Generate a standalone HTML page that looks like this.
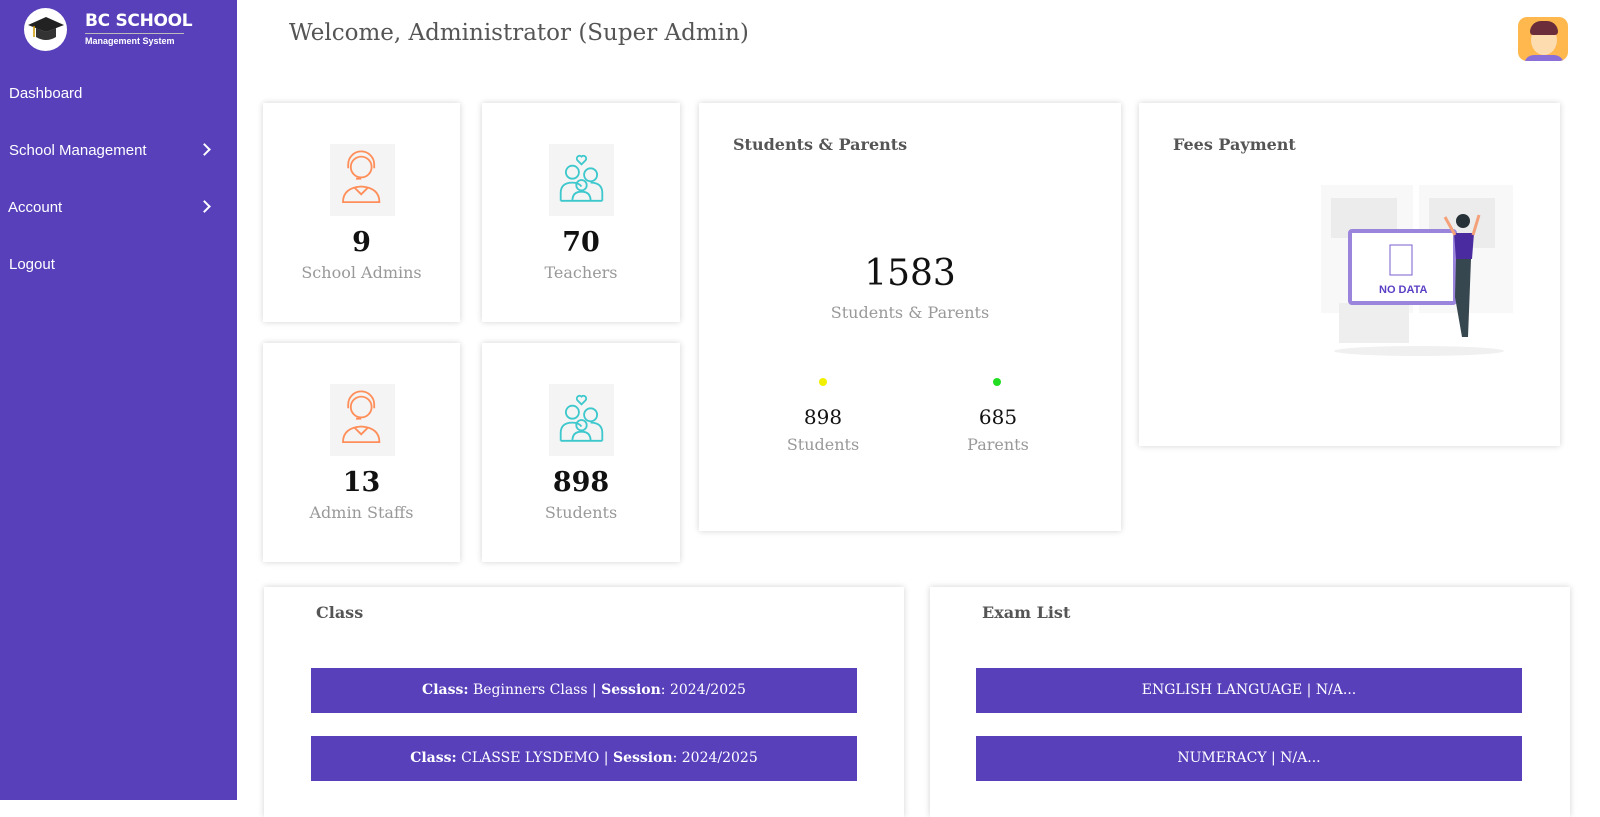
<!DOCTYPE html>
<html><head><meta charset="utf-8"><style>
*{margin:0;padding:0;box-sizing:border-box}
body{width:1600px;height:800px;overflow:hidden;background:#fff;font-family:"DejaVu Serif","Liberation Serif",serif;position:relative}
.side{position:absolute;left:0;top:0;width:237px;height:800px;background:#5840bb;color:#fff;font-family:"Liberation Sans",sans-serif}
.side .item{position:absolute;left:9px;font-size:15px}
.chev{position:absolute;left:200px;width:9px;height:9px;border-right:2.5px solid #fff;border-top:2.5px solid #fff;transform:rotate(45deg)}
.card{position:absolute;background:#fff;box-shadow:0 0 6px rgba(0,0,0,.18)}
.ib{position:absolute;left:67px;top:41px;width:65px;height:72px;background:#f4f4f4}
.num{position:absolute;width:100%;text-align:center;top:124px;font-size:27px;font-weight:bold;color:#111}
.lab{position:absolute;width:100%;text-align:center;top:160px;font-size:16px;color:#999}
.h{position:absolute;font-size:16px;font-weight:bold;color:#555}
.btn{position:absolute;background:#5840bb;color:#fff;height:45px;font-size:14px;text-align:center;line-height:45px;width:546px}
</style></head><body>
<div class="side">
 <div style="position:absolute;left:24px;top:8px;width:43px;height:43px;border-radius:50%;background:#fff"></div>
 <svg style="position:absolute;left:26px;top:15px" width="40" height="30"><polygon points="20,2 38,10 20,17 2,10" fill="#222"/><path d="M10 13 v9 q10 6 20 0 v-9 l-10 4z" fill="#333"/><line x1="8" y1="11" x2="8" y2="22" stroke="#c90" stroke-width="1.5"/></svg>
 <div style="position:absolute;left:85px;top:11px;font-family:'DejaVu Sans',sans-serif;font-weight:bold;font-size:17px;letter-spacing:-.3px">BC SCHOOL</div>
 <div style="position:absolute;left:85px;top:33px;width:99px;border-top:1px solid #bbb"></div>
 <div style="position:absolute;left:85px;top:36px;font-size:9px;font-weight:bold">Management System</div>
 <div class="item" style="top:85px">Dashboard</div>
 <div class="item" style="top:142px">School Management</div><div class="chev" style="top:145px"></div>
 <div class="item" style="top:199px;left:8px">Account</div><div class="chev" style="top:202px"></div>
 <div class="item" style="top:256px">Logout</div>
</div>
<div style="position:absolute;left:289px;top:20px;font-size:23px;color:#555;font-family:'DejaVu Serif',serif;font-weight:300">Welcome, Administrator (Super Admin)</div>
<div style="position:absolute;left:1518px;top:17px;width:50px;height:44px;border-radius:9px;background:#ffb84d;overflow:hidden">
 <div style="position:absolute;left:13px;top:8px;width:26px;height:30px;border-radius:50%;background:#fddcb0"></div>
 <div style="position:absolute;left:12px;top:4px;width:28px;height:14px;border-radius:14px 14px 4px 4px;background:#6b2d3a"></div>
 <div style="position:absolute;left:6px;top:38px;width:40px;height:12px;border-radius:10px 10px 0 0;background:#8a6fd8"></div>
</div>

<div class="card" style="left:263px;top:103px;width:197px;height:219px"><div class="ib"><svg width="65" height="72" viewBox="8 16 50 50" fill="none" stroke="#ff8f5a" stroke-width="1.4"><circle cx="32" cy="31" r="8"/><path d="M22 32 v-3 a10 10 0 0 1 20 0 v3"/><path d="M32 40 h-4"/><path d="M18 58 q0-11 14-12 q14 1 14 12z"/><path d="M27 47 l5 5 l5-5"/></svg></div><div class="num">9</div><div class="lab">School Admins</div></div>
<div class="card" style="left:482px;top:103px;width:198px;height:219px"><div class="ib"><svg width="65" height="72" viewBox="8 16 50 50" fill="none" stroke="#3cc8cc" stroke-width="1.4"><circle cx="26" cy="35" r="5"/><circle cx="40" cy="37" r="5"/><circle cx="33" cy="45" r="4"/><path d="M17 57 v-6 q0-8 9-8 q5 0 7 3"/><path d="M49 57 v-6 q0-8-9-8"/><path d="M26 57 q0-7 7-7 q7 0 7 7"/><path d="M17 57h32"/><path d="M33 29 l-3-3 a2 2 0 0 1 3-3 a2 2 0 0 1 3 3z"/></svg></div><div class="num">70</div><div class="lab">Teachers</div></div>
<div class="card" style="left:263px;top:343px;width:197px;height:219px"><div class="ib"><svg width="65" height="72" viewBox="8 16 50 50" fill="none" stroke="#ff8f5a" stroke-width="1.4"><circle cx="32" cy="31" r="8"/><path d="M22 32 v-3 a10 10 0 0 1 20 0 v3"/><path d="M32 40 h-4"/><path d="M18 58 q0-11 14-12 q14 1 14 12z"/><path d="M27 47 l5 5 l5-5"/></svg></div><div class="num">13</div><div class="lab">Admin Staffs</div></div>
<div class="card" style="left:482px;top:343px;width:198px;height:219px"><div class="ib"><svg width="65" height="72" viewBox="8 16 50 50" fill="none" stroke="#3cc8cc" stroke-width="1.4"><circle cx="26" cy="35" r="5"/><circle cx="40" cy="37" r="5"/><circle cx="33" cy="45" r="4"/><path d="M17 57 v-6 q0-8 9-8 q5 0 7 3"/><path d="M49 57 v-6 q0-8-9-8"/><path d="M26 57 q0-7 7-7 q7 0 7 7"/><path d="M17 57h32"/><path d="M33 29 l-3-3 a2 2 0 0 1 3-3 a2 2 0 0 1 3 3z"/></svg></div><div class="num">898</div><div class="lab">Students</div></div>

<div class="card" style="left:699px;top:103px;width:422px;height:428px">
 <div class="h" style="left:34px;top:32px">Students &amp; Parents</div>
 <div style="position:absolute;width:100%;text-align:center;top:150px;font-size:36px;color:#111">1583</div>
 <div style="position:absolute;width:100%;text-align:center;top:200px;font-size:16px;color:#999">Students &amp; Parents</div>
 <div style="position:absolute;left:120px;top:275px;width:8px;height:8px;border-radius:50%;background:#f0f000"></div>
 <div style="position:absolute;left:294px;top:275px;width:8px;height:8px;border-radius:50%;background:#22dd22"></div>
 <div style="position:absolute;left:64px;width:120px;text-align:center;top:302px;font-size:20px;color:#111">898</div>
 <div style="position:absolute;left:64px;width:120px;text-align:center;top:332px;font-size:16px;color:#999">Students</div>
 <div style="position:absolute;left:239px;width:120px;text-align:center;top:302px;font-size:20px;color:#111">685</div>
 <div style="position:absolute;left:239px;width:120px;text-align:center;top:332px;font-size:16px;color:#999">Parents</div>
</div>
<div class="card" style="left:1139px;top:103px;width:421px;height:343px">
 <div class="h" style="left:34px;top:32px">Fees Payment</div>
 <svg style="position:absolute;left:170px;top:80px" width="220" height="175">
  <rect x="12" y="2" width="92" height="128" fill="#f8f8f8"/><rect x="110" y="2" width="94" height="128" fill="#f8f8f8"/>
  <rect x="22" y="15" width="66" height="40" fill="#ececec"/><rect x="120" y="15" width="66" height="50" fill="#ececec"/>
  <rect x="30" y="120" width="70" height="40" fill="#eee"/>
  <ellipse cx="110" cy="168" rx="85" ry="5" fill="#f0f0f0"/>
  <rect x="41" y="48" width="105" height="72" rx="2" fill="#fff" stroke="#9b85dc" stroke-width="4"/>
  <rect x="81" y="62" width="22" height="30" fill="#fff" stroke="#7a5fd0"/>
  <text x="70" y="110" font-family="Liberation Sans" font-weight="bold" font-size="11" fill="#5b3fc4">NO DATA</text>
  <circle cx="154" cy="38" r="7" fill="#263238"/>
  <path d="M145 50 h20 l-2 26 h-16z" fill="#4a2ca0"/>
  <path d="M147 76 h15 l-3 78 h-6 l-7-40z" fill="#37474f"/>
  <path d="M146 52 l-10-18 M164 52 l6-20" stroke="#f4a17a" stroke-width="3"/>
 </svg>
</div>

<div class="card" style="left:264px;top:587px;width:640px;height:230px">
 <div class="h" style="left:52px;top:16px">Class</div>
 <div class="btn" style="left:47px;top:81px"><b>Class:</b> Beginners Class | <b>Session</b>: 2024/2025</div>
 <div class="btn" style="left:47px;top:149px"><b>Class:</b> CLASSE LYSDEMO | <b>Session</b>: 2024/2025</div>
</div>
<div class="card" style="left:930px;top:587px;width:640px;height:230px">
 <div class="h" style="left:52px;top:16px">Exam List</div>
 <div class="btn" style="left:46px;top:81px">ENGLISH LANGUAGE | N/A...</div>
 <div class="btn" style="left:46px;top:149px">NUMERACY | N/A...</div>
</div>
</body></html>
